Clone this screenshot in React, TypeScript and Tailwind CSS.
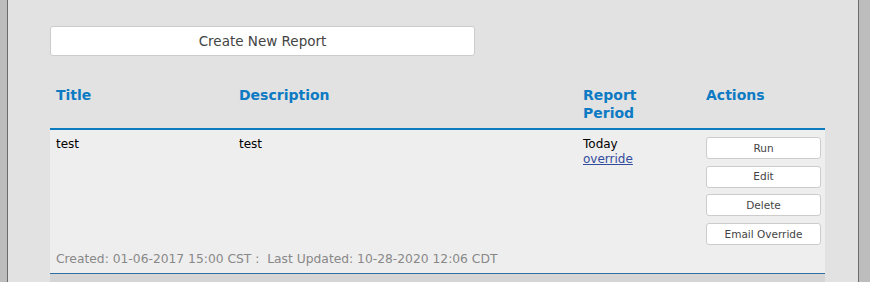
const font = { fontFamily: '"DejaVu Sans", Verdana, sans-serif' };

function ActionButton({ label }: { label: string }) {
  return (
    <button className="h-[22px] w-[115px] rounded-[3px] border border-[#cccccc] bg-white text-[10.5px] text-[#444444]">
      {label}
    </button>
  );
}

export default function App() {
  return (
    <div className="flex h-[282px] w-[870px] bg-[#bdbdbd]" style={font}>
      <div className="ml-[7px] mr-[11px] flex-1 border-x border-x-[#6b6b6b] bg-[#e2e2e2]">
        <div className="pl-[42px] pr-[33px] pt-[26px]">
          <button className="h-[30px] w-[425px] rounded-[3px] border border-[#cccccc] bg-white text-[13.5px] text-[#444444]">
            Create New Report
          </button>

          <div className="mt-[28px] grid grid-cols-[183px_344px_123px_125px] border-b-2 border-b-[#0b7bc0] pb-[6px] text-[14px] font-bold leading-[18px] text-[#0d7ac4]">
            <div className="px-[6px] pt-[2px]">Title</div>
            <div className="px-[6px] pt-[2px]">Description</div>
            <div className="px-[6px] pt-[2px]">
              Report
              <br />
              Period
            </div>
            <div className="px-[6px] pt-[2px]">Actions</div>
          </div>

          <div className="border-b border-b-[#2d6fa3] bg-[#eeeeee] pb-[6px]">
            <div className="grid grid-cols-[183px_344px_123px_125px] pt-[6px] text-[12px] leading-[15px] text-black">
              <div className="px-[6px] pt-[1px]">test</div>
              <div className="px-[6px] pt-[1px]">test</div>
              <div className="px-[6px] pt-[1px]">
                <div>Today</div>
                <a href="#" className="text-[#334c9c] underline">
                  override
                </a>
              </div>
              <div className="flex flex-col gap-[6.7px] px-[6px] pt-[1px]">
                <ActionButton label="Run" />
                <ActionButton label="Edit" />
                <ActionButton label="Delete" />
                <ActionButton label="Email Override" />
              </div>
            </div>
            <div className="mt-[7px] px-[6px] text-[12.3px] leading-[15px] text-[#888888]">
              Created: 01-06-2017 15:00 CST :&nbsp; Last Updated: 10-28-2020 12:06 CDT
            </div>
          </div>
          <div className="h-[20px] bg-[#d5d5d5]" />
        </div>
      </div>
    </div>
  );
}
